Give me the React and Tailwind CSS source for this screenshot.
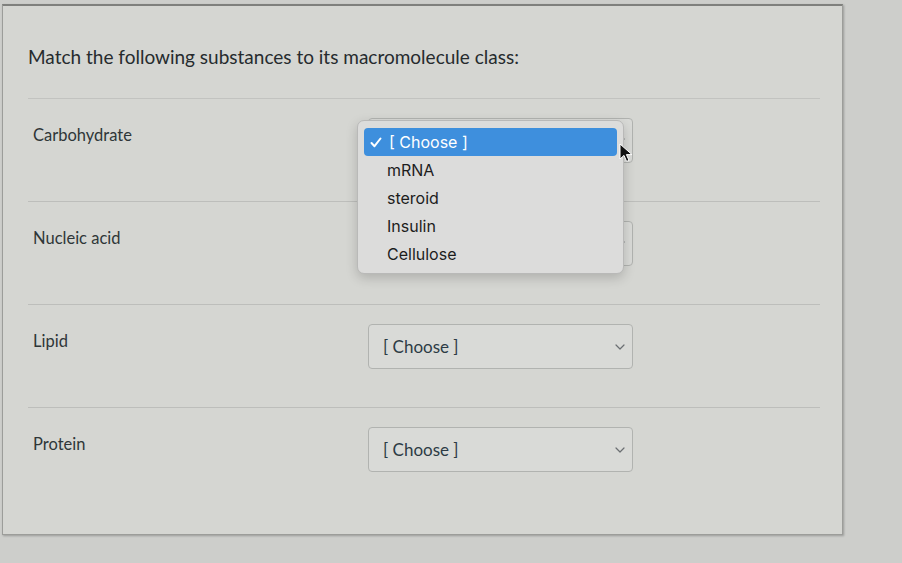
import React from "react";

const rows = ["Carbohydrate", "Nucleic acid", "Lipid", "Protein"];
const options = ["[ Choose ]", "mRNA", "steroid", "Insulin", "Cellulose"];

const Chevron = () => (
  <svg width="10" height="6" viewBox="0 0 10 6" fill="none">
    <path d="M1 1l4 4 4-4" stroke="#6b6f72" strokeWidth="1.2" strokeLinecap="round" strokeLinejoin="round" />
  </svg>
);

const SelectBox = () => (
  <div className="w-[265px] h-[45px] flex items-center justify-between pl-[14px] pr-[7px] bg-[#d9dad7] border border-[#b1b3b0] rounded-[4px] text-[17px] text-[#2d3b45]">
    <span>[ Choose ]</span>
    <Chevron />
  </div>
);

const Row = ({ label, last }) => (
  <div className={"flex pl-[5px] pt-[19px] pb-[38px] " + (last ? "" : "border-b border-[#bdbebb]")}>
    <div className="w-[335px] pt-[5px] text-[16.5px] text-[#2f3638]">{label}</div>
    <SelectBox />
  </div>
);

export default function App() {
  return (
    <div className="relative w-[902px] h-[563px] overflow-hidden bg-[#cdcecb] pt-[4px] pl-[2px]" style={{ fontFamily: "Lato, 'Open Sans', sans-serif" }}>
      <div className="w-[841px] h-[531px] bg-[#d5d6d2] border border-[#9c9d9a] border-t-2 border-t-[#7f807d] shadow-[1px_1px_2px_rgba(0,0,0,0.25)] pl-[25px] pr-[22px]">
        <h2 className="pt-[38px] pb-[28px] text-[19px] leading-[26px] text-[#262b2e] border-b border-[#c2c3c0]">
          Match the following substances to its macromolecule class:
        </h2>
        {rows.map((r, i) => (
          <Row key={r} label={r} last={i === rows.length - 1} />
        ))}
      </div>

      {/* open native dropdown */}
      <div
        className="absolute left-[357px] top-[120px] w-[267px] px-[6px] pt-[7px] pb-[5px] rounded-[7px] bg-[#dcdcdb] border border-[#b9b9b8] shadow-[0_4px_12px_rgba(0,0,0,0.18)]"
        style={{ fontFamily: "Inter, 'Liberation Sans', sans-serif" }}
      >
        {options.map((o, i) => (
          <div
            key={o}
            className={
              "h-[28px] flex items-center text-[16px] rounded-[4px] " +
              (i === 0 ? "bg-[#3e8fdd] text-white pl-[6px]" : "text-[#1d1d1d] pl-[23px]")
            }
          >
            {i === 0 && (
              <svg className="mr-[7px]" width="12" height="11" viewBox="0 0 12 11" fill="none">
                <path d="M1.5 6l3 3.2L10.5 1.5" stroke="#fff" strokeWidth="2" strokeLinecap="round" strokeLinejoin="round" />
              </svg>
            )}
            {o}
          </div>
        ))}
      </div>

      {/* mouse pointer */}
      <svg className="absolute left-[619px] top-[143px]" width="14" height="20" viewBox="0 0 14 20">
        <path d="M1 1v15l4-3.6 2.6 6 2.4-1-2.6-5.8H13z" fill="#111" stroke="#fff" strokeWidth="1" strokeLinejoin="round" />
      </svg>
    </div>
  );
}
